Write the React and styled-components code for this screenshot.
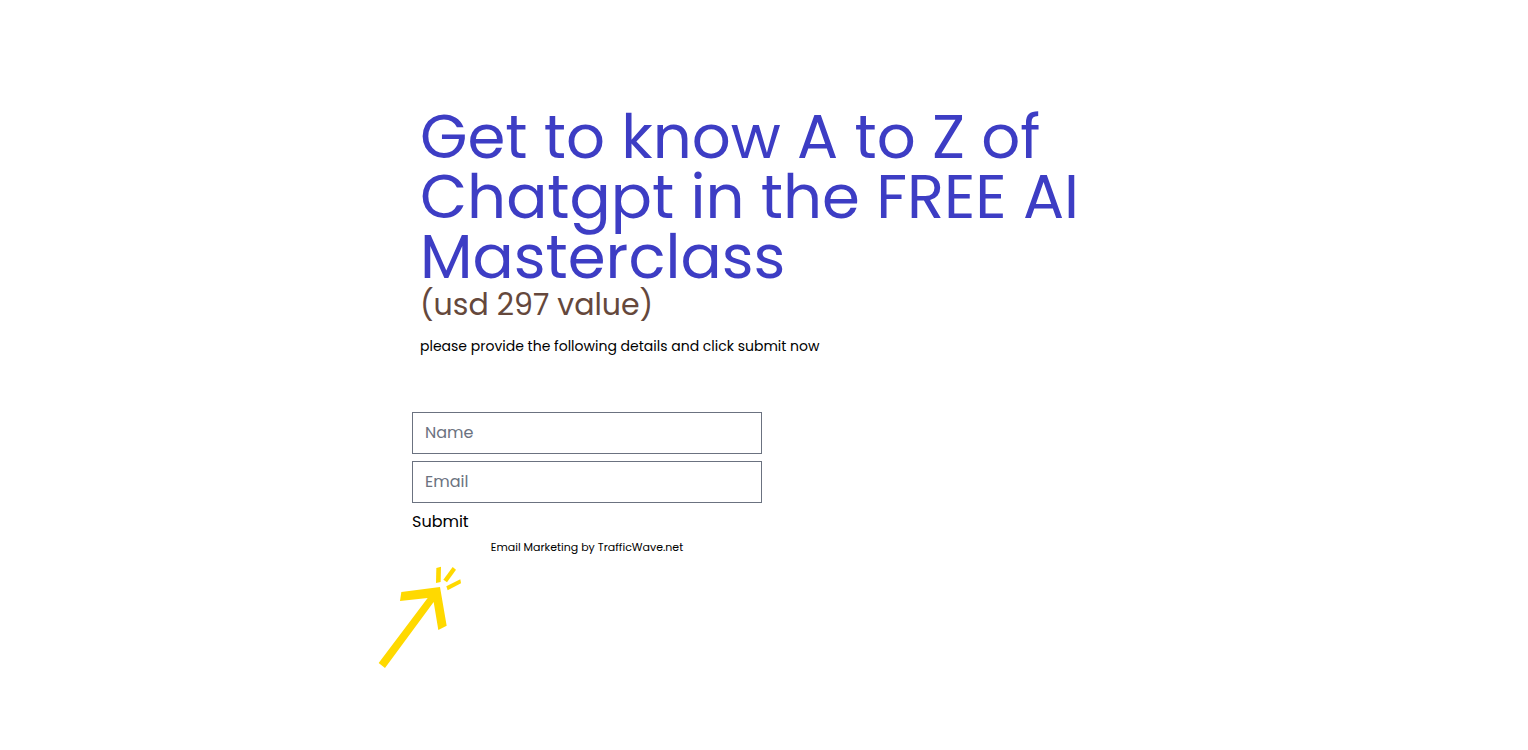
import styled, { createGlobalStyle } from 'styled-components';

const GlobalStyle = createGlobalStyle`
  * {
    box-sizing: border-box;
  }

  body {
    margin: 0;
    background-color: #fff;
    color: #000;
    font-family: Poppins, Inter, sans-serif;
    font-size: 16px;
    line-height: 24px;
  }
`;

const Page = styled.main`
  max-width: 788px;
  margin: 0 auto;
  padding: 107px 0 40px;
`;

const Intro = styled.header`
  padding: 0 50px;
`;

const Title = styled.h1`
  margin: 0;
  color: #3d3dc4;
  font-size: 61px;
  font-weight: 400;
  line-height: 60px;
`;

const Value = styled.p`
  margin: 0;
  color: #65483c;
  font-size: 30px;
  line-height: 36px;
`;

const Hint = styled.p`
  margin: 13px 0 0;
  font-size: 14px;
  line-height: 20px;
`;

const Form = styled.form`
  display: flex;
  flex-direction: column;
  align-items: flex-start;
  gap: 7px;
  max-width: 350px;
  margin: 56px 42px 0;
`;

const Field = styled.input`
  width: 100%;
  height: 42px;
  padding: 7px 12px 9px;
  border: 1px solid #6b7280;
  border-radius: 0;
  background-color: #fff;
  color: #000;
  font: inherit;

  &::placeholder {
    color: #6b7280;
    opacity: 1;
  }
`;

const SubmitButton = styled.button`
  padding: 0;
  border: 0;
  background-color: transparent;
  color: inherit;
  font: inherit;
  cursor: pointer;
`;

const Credit = styled.a`
  align-self: center;
  color: inherit;
  font-size: 11px;
  line-height: 12px;
  text-decoration: none;
`;

const Arrow = styled.svg`
  display: block;
  width: 100px;
  height: 115px;
  margin-top: 7px;
  fill: #ffd900;
`;

const PointingArrow = () => (
  <Arrow viewBox="0 0 300 345" aria-hidden="true">
    <path d="M94 96 L210 81 L230 197 L205 210 L191 126 L45 324 L26 309 L173 114 L90 123 Z" />
    <path d="M199 24 L213 20 L212 66 L198 69 Z" />
    <path d="M248 21 L258 29 L231 67 L220 59 Z" />
    <path d="M271 58 L273 70 L233 91 L229 79 Z" />
  </Arrow>
);

const App = () => (
  <>
    <GlobalStyle />
    <Page>
      <Intro>
        <Title>Get to know A to Z of Chatgpt in the FREE AI Masterclass</Title>
        <Value>(usd 297 value)</Value>
        <Hint>please provide the following details and click submit now</Hint>
      </Intro>
      <Form onSubmit={(event) => event.preventDefault()}>
        <Field type="text" name="name" placeholder="Name" aria-label="Name" />
        <Field type="email" name="email" placeholder="Email" aria-label="Email" />
        <SubmitButton type="submit">Submit</SubmitButton>
        <Credit href="#trafficwave">Email Marketing by TrafficWave.net</Credit>
      </Form>
      <PointingArrow />
    </Page>
  </>
);

export default App;
